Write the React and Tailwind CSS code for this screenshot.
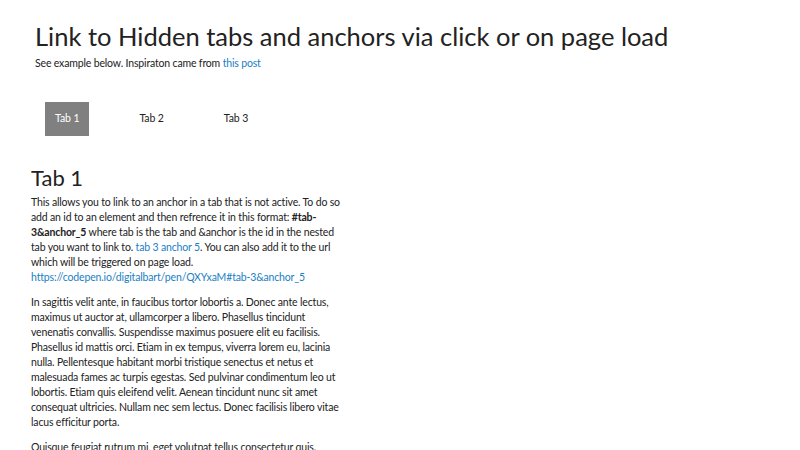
import { useState } from "react"

function App() {
  const [active, setActive] = useState(1)
  const tabs = [1, 2, 3]

  return (
    <div className="min-h-[450px] bg-white text-[#222] font-['Lato',sans-serif]">
      <header className="pl-[35px] pt-[19px]">
        <h1 className="text-[25.5px] leading-[34px] text-[#222]">
          Link to Hidden tabs and anchors via click or on page load
        </h1>
        <p className="text-[10.5px] tracking-[-0.16px] leading-[14px] mt-[3px]">
          See example below. Inspiraton came from{" "}
          <a href="#" className="text-[#1a80c4]">this post</a>
        </p>
      </header>

      <nav className="flex gap-[40px] pl-[45px] mt-[32px]">
        {tabs.map((t) => (
          <button
            key={t}
            onClick={() => setActive(t)}
            className={
              "h-[34px] px-[10px] text-[10.5px] tracking-[-0.1px] " +
              (active === t ? "bg-[#808080] text-white" : "text-[#222]")
            }
          >
            Tab {t}
          </button>
        ))}
      </nav>

      <section className="ml-[31px] mt-[28px] w-[311px] text-[10.5px] tracking-[-0.16px] leading-[15px] text-[#222]">
        <h2 className="text-[22px] tracking-normal leading-[28px] mb-[3px]">Tab 1</h2>
        <p>
          This allows you to link to an anchor in a tab that is not active. To do so add an id to
          an element and then refrence it in this format: <b>#tab-3&amp;anchor_5</b> where tab is
          the tab and &amp;anchor is the id in the nested tab you want to link to.{" "}
          <a href="#" className="text-[#1a80c4]">tab 3 anchor 5</a>. You can also add it to the url
          which will be triggered on page load.{" "}
          <a href="#" className="text-[#1a80c4]">https://codepen.io/digitalbart/pen/QXYxaM#tab-3&amp;anchor_5</a>
        </p>
        <p className="mt-[10px]">
          In sagittis velit ante, in faucibus tortor lobortis a. Donec ante lectus, maximus ut
          auctor at, ullamcorper a libero. Phasellus tincidunt venenatis convallis. Suspendisse
          maximus posuere elit eu facilisis. Phasellus id mattis orci. Etiam in ex tempus, viverra
          lorem eu, lacinia nulla. Pellentesque habitant morbi tristique senectus et netus et
          malesuada fames ac turpis egestas. Sed pulvinar condimentum leo ut lobortis. Etiam quis
          eleifend velit. Aenean tincidunt nunc sit amet consequat ultricies. Nullam nec sem
          lectus. Donec facilisis libero vitae lacus efficitur porta.
        </p>
        <p className="mt-[10px]">
          Quisque feugiat rutrum mi, eget volutpat tellus consectetur quis. Vestibulum ante ipsum
          primis in faucibus orci luctus et ultrices posuere cubilia curae.
        </p>
      </section>
    </div>
  )
}

export default App
